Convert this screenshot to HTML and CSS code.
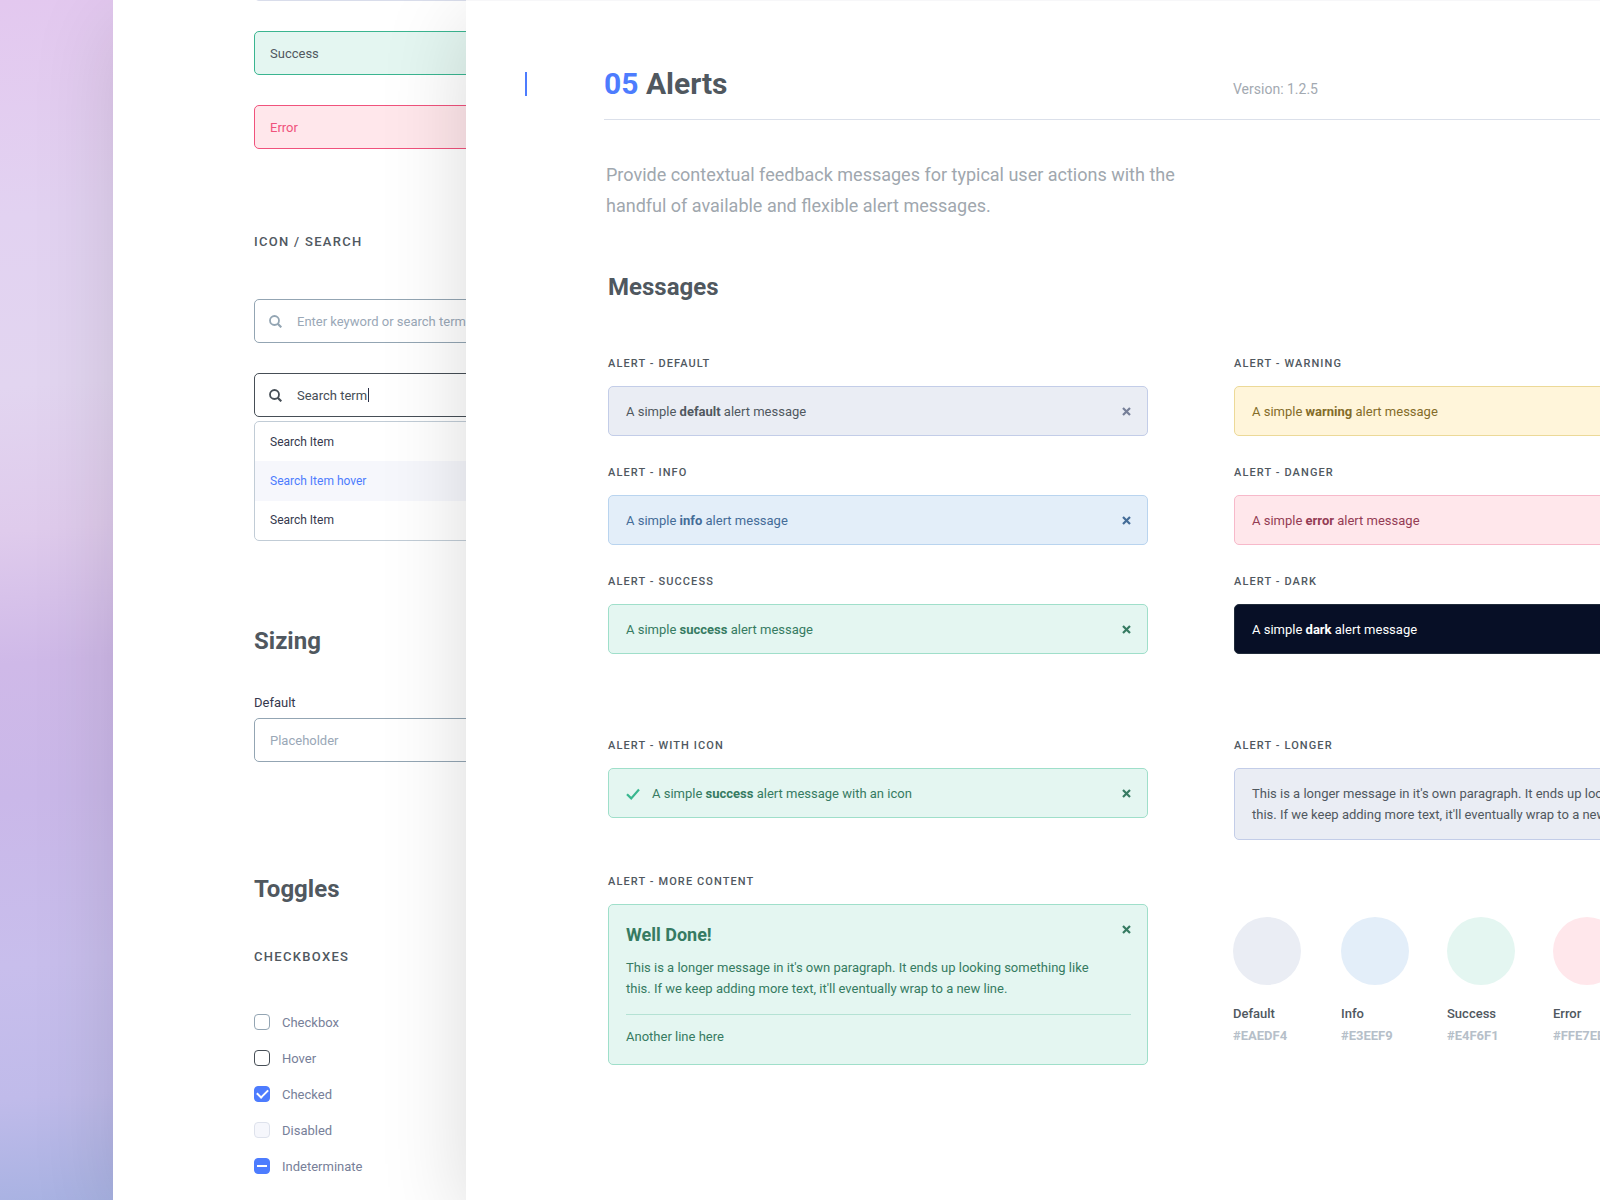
FILE: index.html
```html
<!DOCTYPE html>
<html lang="en">
<head>
    <meta charset="UTF-8">
    <meta name="viewport" content="width=device-width, initial-scale=1.0">
    <title>Alerts</title>
    <link rel="stylesheet" href="styles.css">
</head>
<body>
    <svg class="sprite" width="0" height="0" aria-hidden="true">
        <symbol id="icon-close" viewBox="0 0 9 9">
            <path d="M1 1l7 7M8 1L1 8" fill="none" stroke="currentColor" stroke-width="2.2"/>
        </symbol>
        <symbol id="icon-search" viewBox="0 0 13 13">
            <circle cx="5.5" cy="5.5" r="4.5" fill="none" stroke="currentColor" stroke-width="1.8"/>
            <path d="M8.7 8.7l3.6 3.6" fill="none" stroke="currentColor" stroke-width="2.2"/>
        </symbol>
        <symbol id="icon-check" viewBox="0 0 14 12">
            <path d="M1 6.2l4.2 4.2L13 1.6" fill="none" stroke="currentColor" stroke-width="2.2"/>
        </symbol>
    </svg>

    <section class="forms">
        <input class="field field-top" type="text" aria-label="Default field">
        <input class="field field-success" type="text" value="Success" aria-label="Success field">
        <input class="field field-error" type="text" value="Error" aria-label="Error field">

        <h3 class="forms-label search-title">Icon / Search</h3>
        <label class="field search">
            <svg width="13" height="13"><use href="#icon-search"/></svg>
            <input type="text" placeholder="Enter keyword or search term" aria-label="Search">
        </label>
        <label class="field search search-active">
            <svg width="13" height="13"><use href="#icon-search"/></svg>
            <input type="text" value="Search term" aria-label="Active search">
            <span class="caret"></span>
        </label>
        <ul class="results">
            <li><a href="#">Search Item</a></li>
            <li class="hover"><a href="#">Search Item hover</a></li>
            <li><a href="#">Search Item</a></li>
        </ul>

        <h2 class="sizing-title">Sizing</h2>
        <label class="field-label" for="sizeDefault">Default</label>
        <input class="field" type="text" id="sizeDefault" placeholder="Placeholder">

        <h2 class="toggles-title">Toggles</h2>
        <h3 class="forms-label">Checkboxes</h3>
        <div class="checks">
            <label class="check"><input type="checkbox">Checkbox</label>
            <label class="check"><input type="checkbox" class="is-hover">Hover</label>
            <label class="check"><input type="checkbox" class="is-checked" checked>Checked</label>
            <label class="check"><input type="checkbox" disabled>Disabled</label>
            <label class="check"><input type="checkbox" class="is-mixed">Indeterminate</label>
        </div>
    </section>

    <main class="alerts">
        <header class="alerts-header">
            <h1><span>05</span> Alerts</h1>
            <p class="version">Version: 1.2.5</p>
        </header>
        <p class="intro">Provide contextual feedback messages for typical user actions with the handful of available and flexible alert messages.</p>

        <div class="content">
            <h2>Messages</h2>
            <div class="columns">
                <div class="group">
                    <h3>Alert - Default</h3>
                    <div class="alert alert-default">
                        <p>A simple <b>default</b> alert message</p>
                        <button class="close" aria-label="Close"><svg width="9" height="9"><use href="#icon-close"/></svg></button>
                    </div>
                </div>
                <div class="group">
                    <h3>Alert - Warning</h3>
                    <div class="alert alert-warning">
                        <p>A simple <b>warning</b> alert message</p>
                    </div>
                </div>
                <div class="group">
                    <h3>Alert - Info</h3>
                    <div class="alert alert-info">
                        <p>A simple <b>info</b> alert message</p>
                        <button class="close" aria-label="Close"><svg width="9" height="9"><use href="#icon-close"/></svg></button>
                    </div>
                </div>
                <div class="group">
                    <h3>Alert - Danger</h3>
                    <div class="alert alert-danger">
                        <p>A simple <b>error</b> alert message</p>
                    </div>
                </div>
                <div class="group">
                    <h3>Alert - Success</h3>
                    <div class="alert alert-success">
                        <p>A simple <b>success</b> alert message</p>
                        <button class="close" aria-label="Close"><svg width="9" height="9"><use href="#icon-close"/></svg></button>
                    </div>
                </div>
                <div class="group">
                    <h3>Alert - Dark</h3>
                    <div class="alert alert-dark">
                        <p>A simple <b>dark</b> alert message</p>
                    </div>
                </div>
            </div>

            <div class="columns columns-more">
                <div>
                    <div class="group">
                        <h3>Alert - With icon</h3>
                        <div class="alert alert-success">
                            <svg class="alert-icon" width="14" height="12"><use href="#icon-check"/></svg>
                            <p>A simple <b>success</b> alert message with an icon</p>
                            <button class="close" aria-label="Close"><svg width="9" height="9"><use href="#icon-close"/></svg></button>
                        </div>
                    </div>
                    <div class="group group-more">
                        <h3>Alert - More content</h3>
                        <div class="alert alert-success alert-more">
                            <div class="alert-body">
                                <h4>Well Done!</h4>
                                <p>This is a longer message in it's own paragraph. It ends up looking something like this. If we keep adding more text, it'll eventually wrap to a new line.</p>
                                <hr>
                                <p>Another line here</p>
                            </div>
                            <button class="close" aria-label="Close"><svg width="9" height="9"><use href="#icon-close"/></svg></button>
                        </div>
                    </div>
                </div>
                <div>
                    <div class="group">
                        <h3>Alert - Longer</h3>
                        <div class="alert alert-default alert-longer">
                            <p>This is a longer message in it's own paragraph. It ends up looking something like this. If we keep adding more text, it'll eventually wrap to a new line.</p>
                        </div>
                    </div>
                    <ul class="swatches">
                        <li><span class="dot dot-default"></span><b>Default</b><code>#EAEDF4</code></li>
                        <li><span class="dot dot-info"></span><b>Info</b><code>#E3EEF9</code></li>
                        <li><span class="dot dot-success"></span><b>Success</b><code>#E4F6F1</code></li>
                        <li><span class="dot dot-error"></span><b>Error</b><code>#FFE7EB</code></li>
                    </ul>
                </div>
            </div>
        </div>
    </main>
    <script>
        document.querySelector('.is-mixed').indeterminate = true;
    </script>
</body>
</html>
```
FILE: styles.css
```css
* {
    box-sizing: border-box;
}
body {
    display: flex;
    height: 100vh;
    margin: 0;
    padding-left: 113px;
    overflow: hidden;
    font-family: Roboto, sans-serif;
    font-size: 13px;
    color: #50585f;
    background: linear-gradient(176deg, #e3c8ef 0%, #e2d2f1 18%, #e2d5f0 32%, #dfcbec 44%, #cfb9e8 55%, #cab8e9 66%, #c8beec 80%, #c0bbea 91%, #a8b2e2 100%) 0 0 / 113px 100% no-repeat;
}
h1, h2, h3, h4, p, ul {
    margin: 0;
    padding: 0;
}
ul {
    list-style: none;
}
h2 {
    font-size: 24px;
    line-height: 30px;
    font-weight: 700;
}
h3 {
    font-weight: 500;
    letter-spacing: 0.1em;
    text-transform: uppercase;
}
input {
    font: inherit;
    color: inherit;
}
.sprite {
    position: absolute;
}

/* forms sheet */
.forms {
    flex: 0 0 353px;
    padding-left: 141px;
    overflow: hidden;
    background: #fff;
    box-shadow: 0 20px 80px rgba(0, 0, 0, 0.12);
}
.field {
    display: block;
    width: 540px;
    height: 44px;
    margin-bottom: 30px;
    padding: 0 15px;
    border: 1px solid #93a5b3;
    border-radius: 5px;
    background: #fff;
}
.field::placeholder, .search input::placeholder {
    color: #9aa8b7;
    opacity: 1;
}
.field-top {
    margin-top: -43px;
    border-color: #d9ddeb;
}
.field-success {
    border-color: #3ab590;
    background: #e4f6f1;
}
.field-error {
    border-color: #f0527c;
    background: #ffe7eb;
    color: #f0527c;
}
.forms-label {
    font-size: 13px;
    line-height: 20px;
}
.search-title {
    margin: 83px 0 47px;
}
.search {
    display: flex;
    align-items: center;
    padding: 0 14px;
    color: #93a5b3;
}
.search input {
    width: 300px;
    margin-left: 15px;
    padding: 0;
    border: 0;
    outline: 0;
    background: none;
}
.search-active {
    margin-bottom: 4px;
    border-color: #464e56;
    color: #464e56;
}
.search-active input {
    width: 71px;
}
.caret {
    width: 1px;
    height: 14px;
    background: #2b2f45;
}
.results {
    width: 540px;
    padding: 1px 0;
    border: 1px solid #c1ccd6;
    border-radius: 5px;
}
.results a {
    display: block;
    padding-left: 15px;
    font-size: 12px;
    line-height: 38px;
    color: #35384d;
    text-decoration: none;
}
.results .hover a {
    line-height: 40px;
    color: #4d7cfe;
    background: #f6f7fc;
}
.sizing-title {
    margin: 85px 0 37px;
}
.field-label {
    display: block;
    margin-bottom: 5px;
    line-height: 20px;
    color: #35384d;
}
.toggles-title {
    margin: 112px 0 43px;
}
.checks {
    margin-top: 47px;
}
.check {
    display: flex;
    align-items: center;
    height: 16px;
    margin-bottom: 20px;
    color: #778099;
}
.check input {
    appearance: none;
    width: 16px;
    height: 16px;
    margin: 0 12px 0 0;
    border: 1px solid #93a5b3;
    border-radius: 4px;
    background: #fff;
}
.check input:disabled {
    border-color: #dee2ec;
    background: #f6f7fc;
}
.check .is-hover {
    border-color: #464e56;
}
.check .is-checked, .check .is-mixed {
    display: flex;
    align-items: center;
    justify-content: center;
    border-color: #4d7cfe;
    background: #4d7cfe;
}
.check .is-checked::after {
    content: "";
    width: 9px;
    height: 5px;
    margin-bottom: 3px;
    border: solid #fff;
    border-width: 0 0 2px 2px;
    transform: rotate(-45deg);
}
.check .is-mixed::after {
    content: "";
    width: 10px;
    height: 2px;
    background: #fff;
}

/* alerts sheet */
.alerts {
    flex: 1;
    min-width: 0;
    position: relative;
    overflow: hidden;
    border-top: 1px solid #f7f7f9;
    background: #fff;
    box-shadow: 0 20px 80px rgba(0, 0, 0, 0.15);
}
.alerts-header {
    display: flex;
    align-items: center;
    height: 119px;
    margin-left: 138px;
    padding-top: 48px;
    border-bottom: 1px solid #dbe0ea;
}
.alerts-header::before {
    content: "";
    position: absolute;
    left: 59px;
    top: 71px;
    width: 2px;
    height: 24px;
    background: #4d7cfe;
}
h1 {
    flex: 0 0 629px;
    font-size: 30px;
    line-height: 36px;
}
h1 span {
    color: #4d7cfe;
}
.version {
    padding-top: 10px;
    font-size: 14px;
    color: #a3a9b1;
}
.intro {
    max-width: 740px;
    padding: 39px 0 0 140px;
    font-size: 18px;
    line-height: 31px;
    color: #a0a7ae;
}
.content {
    padding-left: 142px;
}
.content h2 {
    margin: 51px 0 53px;
}
.columns {
    display: grid;
    grid-template-columns: 540px 540px;
    gap: 28px 86px;
}
.columns-more {
    margin-top: 83px;
}
.group h3 {
    margin-bottom: 14px;
    font-size: 11px;
    line-height: 17px;
}
.group-more {
    margin-top: 55px;
}
.alert {
    display: flex;
    align-items: center;
    padding: 14px 16px 13px 17px;
    border: 1px solid;
    border-radius: 5px;
    line-height: 21px;
}
.alert p {
    flex: 1;
    max-width: 480px;
}
.alert-icon {
    margin-right: 12px;
    color: #38b78f;
}
.close {
    display: flex;
    margin-left: auto;
    padding: 0;
    border: 0;
    color: inherit;
    background: none;
    cursor: pointer;
}
.alert-default {
    border-color: #c3cde8;
    background: #eaedf4;
}
.alert-default .close {
    color: #778099;
}
.alert-info {
    border-color: #b9d4ef;
    background: #e3eef9;
    color: #446c98;
}
.alert-success {
    border-color: #9fdfca;
    background: #e4f6f1;
    color: #367b62;
}
.alert-warning {
    border-color: #ecd998;
    background: #fff5da;
    color: #846c29;
}
.alert-danger {
    border-color: #f7b9ca;
    background: #ffe7eb;
    color: #943c54;
}
.alert-dark {
    border-color: #202b3a;
    background: #070f26;
    color: #fff;
}
.alert-longer {
    padding-bottom: 14px;
}
.alert-more {
    align-items: flex-start;
    padding: 17px 16px 17px 17px;
}
.alert-more .close {
    margin-top: 3px;
}
.alert-body {
    flex: 1;
    margin-right: -9px;
}
.alert-body h4 {
    margin-bottom: 9px;
    font-size: 18px;
    line-height: 26px;
}
.alert-body hr {
    margin: 15px 0 11px;
    border: 0;
    border-top: 1px solid #b4e2d4;
}

.swatches {
    display: flex;
    gap: 38px;
    margin: 77px 0 0 -1px;
}
.swatches li {
    flex: 0 0 68px;
    line-height: 22px;
}
.swatches li:first-child {
    margin-right: 2px;
}
.swatches b, .swatches code {
    display: block;
    font-family: inherit;
    font-size: 13px;
    font-weight: 500;
}
.swatches code {
    font-weight: 700;
    color: #b6bfc9;
}
.dot {
    display: block;
    height: 68px;
    margin-bottom: 18px;
    border-radius: 50%;
}
.dot-default {
    background: #eaedf4;
}
.dot-info {
    background: #e3eef9;
}
.dot-success {
    background: #e4f6f1;
}
.dot-error {
    background: #ffe7eb;
}
```
